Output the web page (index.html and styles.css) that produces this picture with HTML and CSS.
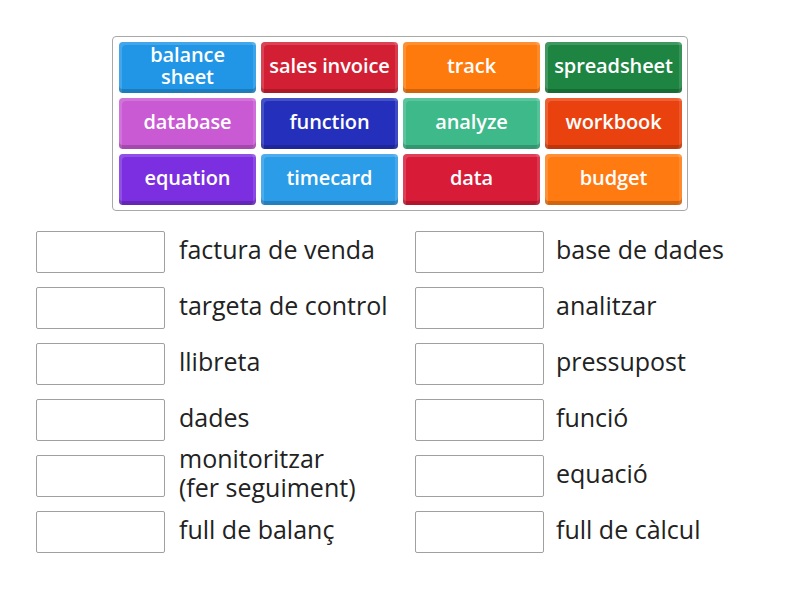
FILE: index.html
```html
<!DOCTYPE html>
<html>
<head>
<meta charset="utf-8">
<link rel="stylesheet" href="styles.css">
</head>
<body>
<div class="page">
  <div class="bank">
    <div class="tile c-blue">balance<br>sheet</div>
    <div class="tile c-red">sales invoice</div>
    <div class="tile c-orange">track</div>
    <div class="tile c-green">spreadsheet</div>
    <div class="tile c-pink">database</div>
    <div class="tile c-navy">function</div>
    <div class="tile c-teal">analyze</div>
    <div class="tile c-redorange">workbook</div>
    <div class="tile c-purple">equation</div>
    <div class="tile c-sky">timecard</div>
    <div class="tile c-crimson">data</div>
    <div class="tile c-orange2">budget</div>
  </div>
  <div class="pairs">
    <div class="col">
      <div class="row"><div class="box"></div><div class="label">factura de venda</div></div>
      <div class="row"><div class="box"></div><div class="label">targeta de control</div></div>
      <div class="row"><div class="box"></div><div class="label">llibreta</div></div>
      <div class="row"><div class="box"></div><div class="label">dades</div></div>
      <div class="row"><div class="box"></div><div class="label">monitoritzar<br>(fer seguiment)</div></div>
      <div class="row"><div class="box"></div><div class="label">full de balanç</div></div>
    </div>
    <div class="col">
      <div class="row"><div class="box"></div><div class="label">base de dades</div></div>
      <div class="row"><div class="box"></div><div class="label">analitzar</div></div>
      <div class="row"><div class="box"></div><div class="label">pressupost</div></div>
      <div class="row"><div class="box"></div><div class="label">funció</div></div>
      <div class="row"><div class="box"></div><div class="label">equació</div></div>
      <div class="row"><div class="box"></div><div class="label">full de càlcul</div></div>
    </div>
  </div>
</div>
</body>
</html>
```
FILE: styles.css
```css
html, body {
  margin: 0;
  padding: 0;
  background: #fff;
}
body {
  font-family: "Open Sans", "Liberation Sans", sans-serif;
  color: #222;
}
.page {
  width: 800px;
  height: 600px;
  position: relative;
}
.bank {
  position: absolute;
  left: 112px;
  top: 36px;
  width: 562px;
  padding: 5px 6px 5px 6px;
  border: 1px solid #a8a8a8;
  border-radius: 4px;
  display: grid;
  grid-template-columns: repeat(4, 137px);
  grid-auto-rows: 51px;
  column-gap: 5px;
  row-gap: 5px;
}
.tile {
  border-radius: 4px;
  color: #fff;
  font-weight: 600;
  font-size: 20px;
  line-height: 22px;
  letter-spacing: -0.1px;
  display: flex;
  align-items: center;
  justify-content: center;
  text-align: center;
  box-shadow: inset 0 -4px 0 rgba(0,0,0,0.18), inset 3px 3px 0 rgba(255,255,255,0.16), inset -3px 0 0 rgba(255,255,255,0.12);
  padding-bottom: 4px;
  box-sizing: border-box;
}
.c-blue { background: #2196e6; }
.c-red { background: #d31f33; }
.c-orange { background: #ff7a0c; }
.c-green { background: #1d8442; }
.c-pink { background: #c95ad3; }
.c-navy { background: #2430bc; }
.c-teal { background: #3db98a; }
.c-redorange { background: #e9420e; }
.c-purple { background: #7b2fe0; }
.c-sky { background: #2b9ce7; }
.c-crimson { background: #d81c37; }
.c-orange2 { background: #ff7b12; }

.pairs {
  position: absolute;
  left: 36px;
  top: 231px;
  display: flex;
}
.col {
  display: flex;
  flex-direction: column;
  gap: 14px;
}
.col:first-child { width: 379px; }
.row {
  display: flex;
  align-items: center;
  height: 42px;
}
.box {
  width: 127px;
  height: 40px;
  border: 1px solid #a0a0a0;
  border-radius: 2px;
  flex: none;
  background: #fff;
}
.label {
  margin-left: 14px;
  font-size: 25px;
  line-height: 29px;
  color: #222;
  white-space: nowrap;
  margin-top: -6px;
}
.col:last-child .label { margin-left: 12px; }
```
